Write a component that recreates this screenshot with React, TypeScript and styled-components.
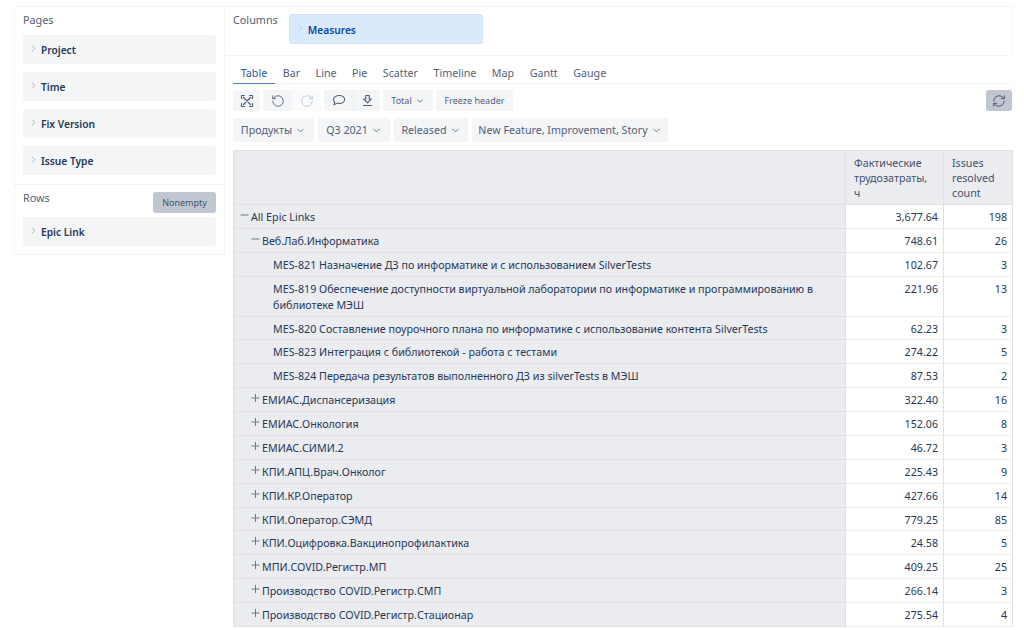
import React from "react";
import styled, { createGlobalStyle } from "styled-components";
import { ChevronRight, ChevronDown, RotateCcw, RotateCw, RefreshCw } from "lucide-react";

const Global = createGlobalStyle`
  html, body { margin: 0; padding: 0; background: #fff; overflow: hidden; }
  body { font-family: "Noto Sans", "Open Sans", sans-serif; font-size: 10.7px; color: #172b4d; }
`;

const Page = styled.div`
  display: flex;
  align-items: flex-start;
  width: 1024px;
  height: 630px;
  overflow: hidden;
  box-sizing: border-box;
  padding: 6px 12px 0 14px;
`;
const Sidebar = styled.aside`
  width: 211px;
  flex: none;
  box-sizing: border-box;
  border: 1px dotted #ebecf0;
`;
const Section = styled.section<{ $divided?: boolean }>`
  padding: 7px 8px ${(p) => (p.$divided ? "8px" : "9px")} 8px;
  border-top: ${(p) => (p.$divided ? "1px dotted #ebecf0" : "none")};
`;
const SectionHead = styled.div`
  display: flex;
  justify-content: space-between;
  align-items: flex-start;
  margin-bottom: 4px;
`;
const Label = styled.div`
  font-size: 10.8px;
  line-height: 12px;
  color: #505f79;
`;
const PagesHead = styled(Label)`
  margin-bottom: 9px;
`;
const Pill = styled.div<{ $active?: boolean; $last?: boolean }>`
  display: flex;
  align-items: center;
  gap: 2px;
  box-sizing: border-box;
  height: 29px;
  padding: 1px 0 0 5px;
  margin-bottom: ${(p) => (p.$last ? "0" : "8px")};
  background: ${(p) => (p.$active ? "#dbe9fd" : "#f4f5f7")};
  border: ${(p) => (p.$active ? "1px solid #cfe1fb" : "none")};
  border-radius: 3px;
  font-weight: 600;
  font-size: 10.2px;
  color: ${(p) => (p.$active ? "#0747a6" : "#253858")};
  svg { color: ${(p) => (p.$active ? "#a9c6ee" : "#a5adba")}; flex: none; margin-top: -3px; }
`;
const Nonempty = styled.button`
  width: 63px;
  height: 21px;
  padding: 0;
  border: none;
  border-radius: 3px;
  background: #c1c7d0;
  color: #42526e;
  font: inherit;
  font-size: 9px;
`;
const Main = styled.main`
  flex: 1;
  min-width: 0;
`;
const ColumnsBar = styled.div`
  display: flex;
  gap: 11px;
  height: 50px;
  box-sizing: border-box;
  padding: 7px 8px 0 8px;
  border-top: 1px dotted #ebecf0;
  border-bottom: 1px dotted #ebecf0;
  border-right: 1px dotted #ebecf0;
`;
const MeasuresPill = styled(Pill)`
  width: 194px;
  height: 30px;
`;
const Content = styled.div`
  padding: 0 0 0 8px;
`;
const Tabs = styled.div`
  display: flex;
  height: 28px;
  box-sizing: border-box;
  padding-top: 7px;
  border-bottom: 1px solid #f4f5f7;
`;
const Tab = styled.div<{ $active?: boolean }>`
  height: 21px;
  line-height: 21px;
  padding: 0 7.75px;
  box-sizing: border-box;
  font-size: 10.7px;
  color: ${(p) => (p.$active ? "#2a5a9e" : "#505f79")};
  border-bottom: ${(p) => (p.$active ? "1px solid #4a7fc4" : "none")};
`;
const Toolbar = styled.div`
  display: flex;
  align-items: center;
  gap: 3px;
  height: 21px;
  margin-top: 6px;
`;
const Btn = styled.div<{ $w: number; $muted?: boolean }>`
  display: flex;
  align-items: center;
  justify-content: center;
  gap: 3px;
  flex: none;
  width: ${(p) => p.$w}px;
  height: 21px;
  box-sizing: border-box;
  background: ${(p) => (p.$muted ? "#fafbfc" : "#f4f5f7")};
  border-radius: 3px;
  font-size: 9px;
  color: ${(p) => (p.$muted ? "#c1c7d0" : "#505f79")};
`;
const Group = styled.div`
  display: flex;
  flex: none;
`;
const GroupBtn = styled(Btn)<{ $sep?: boolean }>`
  border-radius: 0;
  border-left: ${(p) => (p.$sep ? "1px solid #ebecf0" : "none")};
  &:first-child { border-radius: 3px 0 0 3px; }
  &:last-child { border-radius: 0 3px 3px 0; }
`;
const Refresh = styled(Btn)`
  margin-left: auto;
  background: #c1c7d0;
  color: #42526e;
`;
const Filters = styled.div`
  display: flex;
  gap: 4px;
  margin-top: 7px;
`;
const Filter = styled.div<{ $w: number }>`
  display: flex;
  align-items: center;
  justify-content: center;
  gap: 3px;
  width: ${(p) => p.$w}px;
  height: 24px;
  background: #f4f5f7;
  border-radius: 3px;
  color: #505f79;
  font-size: 10.7px;
  svg { color: #6b778c; }
`;
const Table = styled.table`
  border-collapse: collapse;
  table-layout: fixed;
  width: 779px;
  margin-top: 8px;
  font-size: 10.7px;
`;
const Head = styled.th`
  background: #ebecf0;
  border: 1px solid #dfe1e6;
  font-weight: 400;
  text-align: left;
  vertical-align: top;
  padding: 5px 8px 3px 8px;
  line-height: 15px;
  color: #42526e;
`;
const RowHead = styled.td<{ $level: number }>`
  background: #ebecf0;
  border: 1px solid #dfe1e6;
  padding: 4px 28px 2.88px ${(p) => 6 + p.$level * 11}px;
  line-height: 16px;
  color: #253858;
`;
const RowInner = styled.div`
  display: flex;
  align-items: flex-start;
`;
const Toggle = styled.span`
  flex: none;
  width: 11px;
  height: 16px;
  svg { display: block; }
`;
const Num = styled.td`
  border: 1px solid #ebecf0;
  border-right: 1px solid #dfe1e6;
  padding: 4px 5px 2.88px 4px;
  line-height: 16px;
  text-align: right;
  vertical-align: top;
  color: #253858;
`;

const Expand = () => (
  <svg width="14" height="14" viewBox="0 0 14 14" fill="none" stroke="#505f79" strokeWidth="1.2" strokeLinecap="round" strokeLinejoin="round">
    <path d="M3.5 3.5l7 7M10.5 3.5l-7 7M1.5 4.5v-3h3M9.5 1.5h3v3M12.5 9.5v3h-3M4.5 12.5h-3v-3" />
  </svg>
);
const Comment = () => (
  <svg width="14" height="13" viewBox="0 0 14 13" fill="none" stroke="#505f79" strokeWidth="1.1" strokeLinecap="round" strokeLinejoin="round">
    <path d="M7.4 1.5c3 0 5.2 1.7 5.2 4s-2.2 4-5.2 4c-.9 0-1.7-.1-2.4-.4L2 10.9l.7-2.8C1.900 7.400 1.500 6.500 1.500 5.500c0-2.300 2.500-4 5.900-4z" />
  </svg>
);
const Download = () => (
  <svg width="13" height="14" viewBox="0 0 13 14" fill="none" stroke="#505f79" strokeWidth="1.1" strokeLinecap="round" strokeLinejoin="round">
    <path d="M4.8 1.5h3.400v3.500h2L6.500 8.800 2.800 5h2zM2.500 11.500h8" />
  </svg>
);
const ToggleIcon = ({ open }: { open?: boolean }) => (
  <Toggle>
    {open !== undefined && (
      <svg width="9" height="13" viewBox="0 0 9 13" stroke="#6b778c" strokeWidth="1" fill="none">
        {open ? <path d="M0.5 6h8" /> : <path d="M0.5 6h8M4.5 2v8" />}
      </svg>
    )}
  </Toggle>
);

type Row = { l: number; t: string; a: string; b: string; o?: boolean };
const rows: Row[] = [
  { l: 0, t: "All Epic Links", a: "3,677.64", b: "198", o: true },
  { l: 1, t: "Веб.Лаб.Информатика", a: "748.61", b: "26", o: true },
  { l: 2, t: "MES-821 Назначение ДЗ по информатике и с использованием SilverTests", a: "102.67", b: "3" },
  { l: 2, t: "MES-819 Обеспечение доступности виртуальной лаборатории по информатике и программированию в библиотеке МЭШ", a: "221.96", b: "13" },
  { l: 2, t: "MES-820 Составление поурочного плана по информатике с использование контента SilverTests", a: "62.23", b: "3" },
  { l: 2, t: "MES-823 Интеграция с библиотекой - работа с тестами", a: "274.22", b: "5" },
  { l: 2, t: "MES-824 Передача результатов выполненного ДЗ из silverTests в МЭШ", a: "87.53", b: "2" },
  { l: 1, t: "ЕМИАС.Диспансеризация", a: "322.40", b: "16", o: false },
  { l: 1, t: "ЕМИАС.Онкология", a: "152.06", b: "8", o: false },
  { l: 1, t: "ЕМИАС.СИМИ.2", a: "46.72", b: "3", o: false },
  { l: 1, t: "КПИ.АПЦ.Врач.Онколог", a: "225.43", b: "9", o: false },
  { l: 1, t: "КПИ.КР.Оператор", a: "427.66", b: "14", o: false },
  { l: 1, t: "КПИ.Оператор.СЭМД", a: "779.25", b: "85", o: false },
  { l: 1, t: "КПИ.Оцифровка.Вакцинопрофилактика", a: "24.58", b: "5", o: false },
  { l: 1, t: "МПИ.COVID.Регистр.МП", a: "409.25", b: "25", o: false },
  { l: 1, t: "Производство COVID.Регистр.СМП", a: "266.14", b: "3", o: false },
  { l: 1, t: "Производство COVID.Регистр.Стационар", a: "275.54", b: "4", o: false },
];

const pages = ["Project", "Time", "Fix Version", "Issue Type"];
const tabs = ["Table", "Bar", "Line", "Pie", "Scatter", "Timeline", "Map", "Gantt", "Gauge"];
const filters: [string, number][] = [["Продукты", 81], ["Q3 2021", 72], ["Released", 74], ["New Feature, Improvement, Story", 196]];

export default function App() {
  return (
    <Page>
      <Global />
      <Sidebar>
        <Section>
          <PagesHead>Pages</PagesHead>
          {pages.map((p, i) => (
            <Pill key={p} $last={i === pages.length - 1}>
              <ChevronRight size={11} strokeWidth={2} />
              {p}
            </Pill>
          ))}
        </Section>
        <Section $divided>
          <SectionHead>
            <Label>Rows</Label>
            <Nonempty>Nonempty</Nonempty>
          </SectionHead>
          <Pill $last>
            <ChevronRight size={11} strokeWidth={2} />
            Epic Link
          </Pill>
        </Section>
      </Sidebar>
      <Main>
        <ColumnsBar>
          <Label>Columns</Label>
          <MeasuresPill $active $last>
            <ChevronRight size={11} strokeWidth={2} />
            Measures
          </MeasuresPill>
        </ColumnsBar>
        <Content>
          <Tabs>
            {tabs.map((t, i) => (
              <Tab key={t} $active={i === 0}>{t}</Tab>
            ))}
          </Tabs>
          <Toolbar>
            <Btn $w={27}><Expand /></Btn>
            <Group>
              <GroupBtn $w={29}><RotateCcw size={14} strokeWidth={1.5} /></GroupBtn>
              <GroupBtn $w={29} $muted><RotateCw size={14} strokeWidth={1.5} /></GroupBtn>
            </Group>
            <Group>
              <GroupBtn $w={29}><Comment /></GroupBtn>
              <GroupBtn $w={27} $sep><Download /></GroupBtn>
            </Group>
            <Btn $w={50}>Total <ChevronDown size={10} strokeWidth={2} /></Btn>
            <Btn $w={77}>Freeze header</Btn>
            <Refresh $w={26}><RefreshCw size={14} strokeWidth={1.6} /></Refresh>
          </Toolbar>
          <Filters>
            {filters.map(([f, w]) => (
              <Filter key={f} $w={w}>{f} <ChevronDown size={11} strokeWidth={2} /></Filter>
            ))}
          </Filters>
          <Table>
            <colgroup>
              <col style={{ width: 612 }} />
              <col style={{ width: 98 }} />
              <col style={{ width: 69 }} />
            </colgroup>
            <thead>
              <tr>
                <Head />
                <Head>Фактические трудозатраты, ч</Head>
                <Head>Issues resolved count</Head>
              </tr>
            </thead>
            <tbody>
              {rows.map((r) => (
                <tr key={r.t}>
                  <RowHead $level={r.l}>
                    <RowInner>
                      <ToggleIcon open={r.o} />
                      <span>{r.t}</span>
                    </RowInner>
                  </RowHead>
                  <Num>{r.a}</Num>
                  <Num>{r.b}</Num>
                </tr>
              ))}
            </tbody>
          </Table>
        </Content>
      </Main>
    </Page>
  );
}
